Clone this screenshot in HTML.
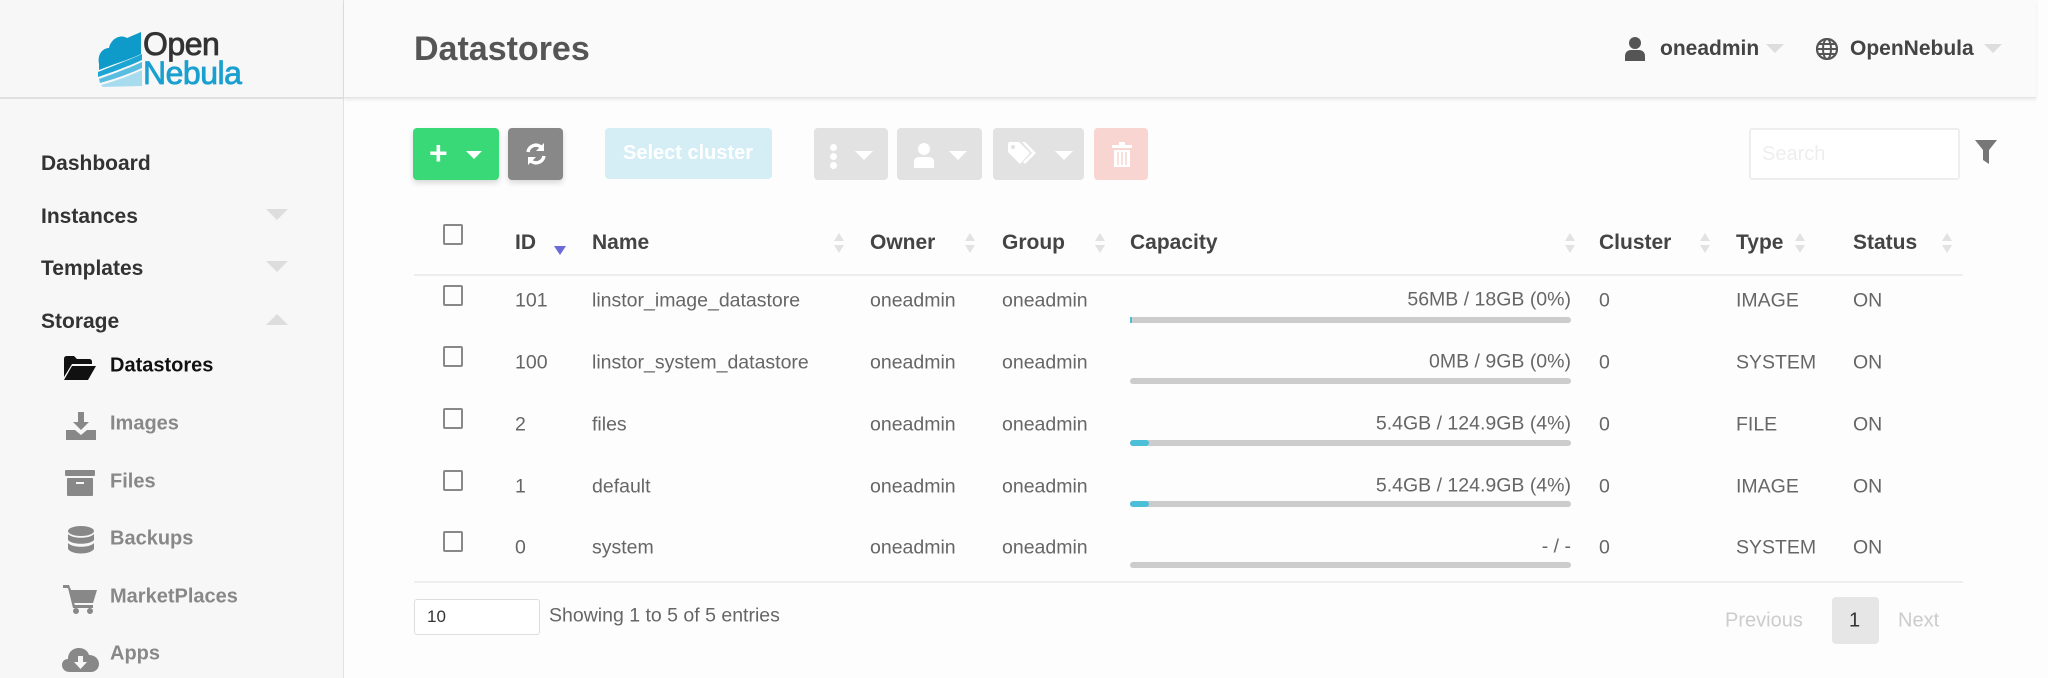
<!DOCTYPE html>
<html><head><meta charset="utf-8"><style>
*{margin:0;padding:0;box-sizing:border-box}
body{width:2048px;height:678px;overflow:hidden;background:#fdfdfd;font-family:"Liberation Sans",sans-serif;color:#555;position:relative}
.a{position:absolute;white-space:nowrap}
#side{left:0;top:0;width:344px;height:678px;background:#f7f7f7;border-right:1px solid #e2e2e2}
#hdr{left:344px;top:0;width:1692px;height:98px;background:#fafafa;box-shadow:0 2px 3px rgba(0,0,0,.08);border-bottom:1px solid #e4e4e4}
#logohdr{left:0;top:97px;width:344px;height:2px;background:#e0e0e0}
.nav{font-size:21px;font-weight:bold;color:#333;left:41px;transform:translateY(-50%)}
.sub{font-size:20px;font-weight:bold;color:#888;left:110px;transform:translateY(-50%)}
.caret{width:0;height:0;border-left:11px solid transparent;border-right:11px solid transparent;border-top:11px solid #ddd}
.caretu{width:0;height:0;border-left:11px solid transparent;border-right:11px solid transparent;border-bottom:11px solid #ddd}
.btn{height:52px;top:128px;border-radius:4px}
.th{font-size:21px;font-weight:bold;color:#444;top:243px;transform:translateY(-50%)}
.td{font-size:19.5px;color:#666;transform:translateY(-50%)}
.cb{width:20px;height:21px;border:2.5px solid #888;border-radius:2px;left:443px}
.bar{left:1130px;width:441px;height:6px;background:#ccc;border-radius:3px}
.sort{width:10px;height:22px}
</style></head><body>
<div class="a" id="side"></div>
<div class="a" id="logohdr"></div>
<div class="a" id="hdr"></div>
<!-- logo -->
<svg class="a" style="left:95px;top:30px" width="50" height="58" viewBox="0 0 50 58">
<path d="M4 34 C2 24 8 18 14 18 C16 8 26 4 32 8 L46 2 L46 24 C34 30 18 34 4 40 Z" fill="#0e9bc9"/>
<path d="M3 42 C18 36 34 30 47 24 L47 30 C34 36 18 42 3 47 Z" fill="#1ca5d3"/>
<path d="M4 49 C18 44 34 38 47 32 L47 38 C34 44 20 49 5 53 Z" fill="#58bde0"/>
<path d="M6 55 C20 51 34 46 47 40 L47 56 L8 57 Z" fill="#a7dcef"/>
</svg>
<div class="a" style="left:143px;top:27px;font-size:32px;color:#333;line-height:34px;-webkit-text-stroke:0.8px #333;letter-spacing:-0.5px">Open</div>
<div class="a" style="left:143px;top:57px;font-size:32px;color:#1aa0d0;line-height:32px;-webkit-text-stroke:0.8px #1aa0d0;letter-spacing:-0.5px">Nebula</div>
<div class="a" style="left:414px;top:30px;font-size:34px;font-weight:bold;color:#555">Datastores</div>
<!-- header right -->
<svg class="a" style="left:1625px;top:37px" width="20" height="24" viewBox="0 0 20 24"><circle cx="10" cy="6" r="6" fill="#555"/><path d="M0 24 V19 C0 15 3 13 6 13 H14 C17 13 20 15 20 19 V24 Z" fill="#555"/></svg>
<div class="a" style="left:1660px;top:37px;font-size:21px;font-weight:bold;color:#444">oneadmin</div>
<div class="a caret" style="left:1766px;top:44px;border-width:9px 9px 0 9px;border-color:#ddd transparent transparent transparent"></div>
<svg class="a" style="left:1816px;top:38px" width="22" height="22" viewBox="0 0 22 22"><circle cx="11" cy="11" r="10" fill="none" stroke="#555" stroke-width="2.2"/><ellipse cx="11" cy="11" rx="4" ry="10" fill="none" stroke="#555" stroke-width="2"/><path d="M1 11H21M3 6H19M3 16H19" stroke="#555" stroke-width="2"/></svg>
<div class="a" style="left:1850px;top:37px;font-size:21px;font-weight:bold;color:#444">OpenNebula</div>
<div class="a caret" style="left:1984px;top:44px;border-width:9px 9px 0 9px;border-color:#ddd transparent transparent transparent"></div>
<!-- sidebar nav -->
<div class="a nav" style="top:164px">Dashboard</div>
<div class="a nav" style="top:217px">Instances</div>
<div class="a caret" style="left:266px;top:209px"></div>
<div class="a nav" style="top:269px">Templates</div>
<div class="a caret" style="left:266px;top:261px"></div>
<div class="a nav" style="top:322px">Storage</div>
<div class="a caretu" style="left:266px;top:314px"></div>
<svg class="a" style="left:63px;top:355px" width="34" height="26" viewBox="0 0 34 26"><path d="M1 4 C1 2 2 1 4 1 H11 L14 4 H26 C28 4 29 5 29 7 V9 H9 L1 22 Z" fill="#111"/><path d="M9 11 H33 L25 25 H1 Z" fill="#111"/></svg>
<div class="a sub" style="top:366px;color:#111">Datastores</div>
<svg class="a" style="left:66px;top:412px" width="30" height="28" viewBox="0 0 30 28"><path d="M12 0H18V10H23L15 18L7 10H12Z" fill="#888"/><path d="M0 18H9L15 23L21 18H30V28H0Z" fill="#888"/></svg>
<div class="a sub" style="top:424px">Images</div>
<svg class="a" style="left:65px;top:470px" width="30" height="26" viewBox="0 0 30 26"><rect x="0" y="0" width="30" height="6" rx="1" fill="#888"/><rect x="2" y="8" width="26" height="18" rx="1" fill="#888"/><rect x="11" y="12" width="8" height="2" fill="#f7f7f7"/></svg>
<div class="a sub" style="top:482px">Files</div>
<svg class="a" style="left:67px;top:526px" width="28" height="28" viewBox="0 0 28 28"><ellipse cx="14" cy="5" rx="13" ry="5" fill="#888"/><path d="M1 8 C5 13 23 13 27 8 V14 C23 19 5 19 1 14Z" fill="#888"/><path d="M1 17 C5 22 23 22 27 17 V23 C23 29 5 29 1 23Z" fill="#888"/></svg>
<div class="a sub" style="top:539px">Backups</div>
<svg class="a" style="left:63px;top:584px" width="35" height="30" viewBox="0 0 35 30"><path d="M0 1H6L8 6H34L30 19H11L12 21H30V24H10L5 4H0Z" fill="#888"/><circle cx="13" cy="27" r="3" fill="#888"/><circle cx="27" cy="27" r="3" fill="#888"/></svg>
<div class="a sub" style="top:597px">MarketPlaces</div>
<svg class="a" style="left:62px;top:643px" width="38" height="30" viewBox="0 0 38 30"><path d="M8 29 C2 29 0 25 0 22 C0 18 3 16 6 16 C6 9 11 5 17 5 C22 5 26 8 27 12 C33 12 37 16 37 21 C37 26 33 29 29 29Z" fill="#888"/><path d="M16 13H21V19H25L18.5 26L12 19H16Z" fill="#f7f7f7"/></svg>
<div class="a sub" style="top:654px">Apps</div>
<!-- toolbar -->
<div class="a btn" style="left:413px;width:86px;background:#3ad977;box-shadow:0 3px 6px rgba(0,0,0,.15)"></div>
<div class="a" style="left:429px;top:137px;font-size:32px;font-weight:bold;color:#fff;line-height:32px">+</div>
<div class="a" style="left:466px;top:151px;border-left:8px solid transparent;border-right:8px solid transparent;border-top:8px solid #fff"></div>
<div class="a btn" style="left:508px;width:55px;background:#888;box-shadow:0 3px 6px rgba(0,0,0,.15)"></div>
<svg class="a" style="left:524px;top:142px" width="24" height="24" viewBox="0 0 24 24"><path d="M4 10 A8 8 0 0 1 18 6" fill="none" stroke="#fff" stroke-width="3.5"/><path d="M20 1V9H12Z" fill="#fff"/><path d="M20 14 A8 8 0 0 1 6 18" fill="none" stroke="#fff" stroke-width="3.5"/><path d="M4 23V15H12Z" fill="#fff"/></svg>
<div class="a btn" style="left:605px;width:167px;top:128px;height:51px;background:#d5eef6"></div>
<div class="a" style="left:623px;top:142px;font-size:20px;font-weight:bold;color:#fff">Select cluster</div>
<div class="a btn" style="left:814px;width:74px;background:#e2e2e2"></div>
<div class="a" style="left:830px;top:144px;width:7px;height:7px;border-radius:50%;background:#fff;box-shadow:0 9px 0 #fff,0 18px 0 #fff"></div>
<div class="a" style="left:855px;top:151px;border-left:9px solid transparent;border-right:9px solid transparent;border-top:9px solid #fff"></div>
<div class="a btn" style="left:897px;width:85px;background:#e2e2e2"></div>
<svg class="a" style="left:914px;top:142px" width="20" height="26" viewBox="0 0 20 26"><circle cx="10" cy="7" r="6" fill="#fff"/><path d="M0 26V20C0 16 3 15 6 15H14C17 15 20 16 20 20V26Z" fill="#fff"/></svg>
<div class="a" style="left:949px;top:151px;border-left:9px solid transparent;border-right:9px solid transparent;border-top:9px solid #fff"></div>
<div class="a btn" style="left:993px;width:91px;background:#e2e2e2"></div>
<svg class="a" style="left:1008px;top:142px" width="30" height="28" viewBox="0 0 30 28"><path d="M0 2C0 1 1 0 2 0H11L22 11L12 22L0 10Z" fill="#fff"/><circle cx="5" cy="5" r="2" fill="#e2e2e2"/><path d="M14 0H17L28 11L17 22L15 20L24 11Z" fill="#fff"/></svg>
<div class="a" style="left:1055px;top:151px;border-left:9px solid transparent;border-right:9px solid transparent;border-top:9px solid #fff"></div>
<div class="a btn" style="left:1094px;width:54px;background:#f8d5d1"></div>
<svg class="a" style="left:1112px;top:142px" width="20" height="26" viewBox="0 0 20 26"><rect x="0" y="3" width="20" height="3" fill="#fff"/><rect x="7" y="0" width="6" height="3" fill="#fff"/><path d="M2 8H18V25H2Z" fill="#fff"/><path d="M6 10V23M10 10V23M14 10V23" stroke="#f8d5d1" stroke-width="1.5"/></svg>
<div class="a" style="left:1749px;top:128px;width:211px;height:52px;border:2px solid #eee;border-radius:3px;background:#fff"></div>
<div class="a" style="left:1762px;top:143px;font-size:20px;color:#eee">Search</div>
<svg class="a" style="left:1975px;top:140px" width="22" height="24" viewBox="0 0 22 24"><path d="M0 0H22L14 10V24L8 20V10Z" fill="#777"/></svg>
<!-- table header -->
<div class="a cb" style="top:224px"></div>
<div class="a th" style="left:515px">ID</div>
<div class="a" style="left:554px;top:246px;border-left:6px solid transparent;border-right:6px solid transparent;border-top:9px solid #6a6ad8"></div>
<div class="a th" style="left:592px">Name</div>
<div class="a th" style="left:870px">Owner</div>
<div class="a th" style="left:1002px">Group</div>
<div class="a th" style="left:1130px">Capacity</div>
<div class="a th" style="left:1599px">Cluster</div>
<div class="a th" style="left:1736px">Type</div>
<div class="a th" style="left:1853px">Status</div>
<svg width="0" height="0" style="position:absolute"><defs><g id="s"><path d="M0 9L5 1L10 9Z M0 13L5 21L10 13Z" fill="#e2e2e2"/></g></defs></svg>
<svg class="a sort" style="left:834px;top:232px"><use href="#s"/></svg>
<svg class="a sort" style="left:965px;top:232px"><use href="#s"/></svg>
<svg class="a sort" style="left:1095px;top:232px"><use href="#s"/></svg>
<svg class="a sort" style="left:1565px;top:232px"><use href="#s"/></svg>
<svg class="a sort" style="left:1700px;top:232px"><use href="#s"/></svg>
<svg class="a sort" style="left:1795px;top:232px"><use href="#s"/></svg>
<svg class="a sort" style="left:1942px;top:232px"><use href="#s"/></svg>
<div class="a" style="left:414px;top:274px;width:1549px;height:2px;background:#eee"></div>
<div class="a" style="left:414px;top:581px;width:1549px;height:2px;background:#eee"></div>
<!-- rows -->
<div class="a cb" style="top:285px"></div>
<div class="a td" style="left:515px;top:301px">101</div>
<div class="a td" style="left:592px;top:301px">linstor_image_datastore</div>
<div class="a td" style="left:870px;top:301px">oneadmin</div>
<div class="a td" style="left:1002px;top:301px">oneadmin</div>
<div class="a td" style="left:1130px;top:300px;width:441px;text-align:right">56MB / 18GB (0%)</div>
<div class="a bar" style="top:317px"><div style="width:2px;height:6px;background:#4bbfd8"></div></div>
<div class="a td" style="left:1599px;top:301px">0</div>
<div class="a td" style="left:1736px;top:301px">IMAGE</div>
<div class="a td" style="left:1853px;top:301px">ON</div>

<div class="a cb" style="top:346px"></div>
<div class="a td" style="left:515px;top:363px">100</div>
<div class="a td" style="left:592px;top:363px">linstor_system_datastore</div>
<div class="a td" style="left:870px;top:363px">oneadmin</div>
<div class="a td" style="left:1002px;top:363px">oneadmin</div>
<div class="a td" style="left:1130px;top:362px;width:441px;text-align:right">0MB / 9GB (0%)</div>
<div class="a bar" style="top:378px"></div>
<div class="a td" style="left:1599px;top:363px">0</div>
<div class="a td" style="left:1736px;top:363px">SYSTEM</div>
<div class="a td" style="left:1853px;top:363px">ON</div>

<div class="a cb" style="top:408px"></div>
<div class="a td" style="left:515px;top:425px">2</div>
<div class="a td" style="left:592px;top:425px">files</div>
<div class="a td" style="left:870px;top:425px">oneadmin</div>
<div class="a td" style="left:1002px;top:425px">oneadmin</div>
<div class="a td" style="left:1130px;top:424px;width:441px;text-align:right">5.4GB / 124.9GB (4%)</div>
<div class="a bar" style="top:440px"><div style="width:19px;height:6px;background:#4bbfd8;border-radius:3px"></div></div>
<div class="a td" style="left:1599px;top:425px">0</div>
<div class="a td" style="left:1736px;top:425px">FILE</div>
<div class="a td" style="left:1853px;top:425px">ON</div>

<div class="a cb" style="top:470px"></div>
<div class="a td" style="left:515px;top:487px">1</div>
<div class="a td" style="left:592px;top:487px">default</div>
<div class="a td" style="left:870px;top:487px">oneadmin</div>
<div class="a td" style="left:1002px;top:487px">oneadmin</div>
<div class="a td" style="left:1130px;top:486px;width:441px;text-align:right">5.4GB / 124.9GB (4%)</div>
<div class="a bar" style="top:501px"><div style="width:19px;height:6px;background:#4bbfd8;border-radius:3px"></div></div>
<div class="a td" style="left:1599px;top:487px">0</div>
<div class="a td" style="left:1736px;top:487px">IMAGE</div>
<div class="a td" style="left:1853px;top:487px">ON</div>

<div class="a cb" style="top:531px"></div>
<div class="a td" style="left:515px;top:548px">0</div>
<div class="a td" style="left:592px;top:548px">system</div>
<div class="a td" style="left:870px;top:548px">oneadmin</div>
<div class="a td" style="left:1002px;top:548px">oneadmin</div>
<div class="a td" style="left:1130px;top:547px;width:441px;text-align:right">- / -</div>
<div class="a bar" style="top:562px"></div>
<div class="a td" style="left:1599px;top:548px">0</div>
<div class="a td" style="left:1736px;top:548px">SYSTEM</div>
<div class="a td" style="left:1853px;top:548px">ON</div>
<!-- footer -->
<div class="a" style="left:414px;top:599px;width:126px;height:36px;border:1.5px solid #ddd;border-radius:3px;background:#fff"></div>
<div class="a" style="left:427px;top:607px;font-size:17px;color:#333">10</div>
<div class="a td" style="left:549px;top:616px">Showing 1 to 5 of 5 entries</div>
<div class="a td" style="left:1725px;top:621px;color:#ccc;font-size:20px">Previous</div>
<div class="a" style="left:1832px;top:597px;width:47px;height:47px;background:#e6e6e6;border-radius:4px"></div>
<div class="a td" style="left:1849px;top:621px;color:#333;font-size:20px">1</div>
<div class="a td" style="left:1898px;top:621px;color:#ccc;font-size:20px">Next</div>
</body></html>
